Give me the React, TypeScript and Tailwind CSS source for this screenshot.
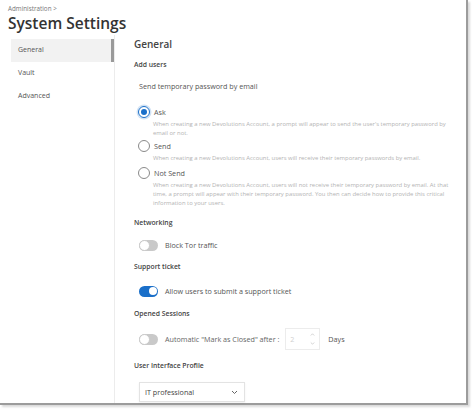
import React from "react";

const font = { fontFamily: '"Open Sans", "Noto Sans", Arial, sans-serif' };

function Radio({ checked }: { checked?: boolean }) {
  return checked ? (
    <span className="flex h-[12px] w-[12px] items-center justify-center rounded-full border-[1.5px] border-[#1a6fc9] shadow-[0_0_0_1.5px_rgba(26,111,201,0.2)]">
      <span className="h-[6px] w-[6px] rounded-full bg-[#1a6fc9]" />
    </span>
  ) : (
    <span className="h-[12px] w-[12px] rounded-full border border-[#8a8a8a]" />
  );
}

function Toggle({ on }: { on?: boolean }) {
  return on ? (
    <span className="flex h-[11px] w-[19px] items-center justify-end rounded-full bg-[#1a6fc9] pr-[1.5px]">
      <span className="h-[8px] w-[8px] rounded-full bg-white" />
    </span>
  ) : (
    <span className="flex h-[11px] w-[19px] items-center rounded-full bg-[#c9c9c9]">
      <span className="h-[11px] w-[11px] rounded-full border border-[#c9c9c9] bg-white" />
    </span>
  );
}

export default function App() {
  return (
    <div className="h-[411px] w-[474px] bg-white" style={font}>
      <div className="flex h-[405px] w-[468px] flex-col border-b-2 border-r-2 border-[#9c9c9c] shadow-[2px_2px_2px_rgba(0,0,0,0.15)]">
        <div className="h-[35px] pl-[8px] pt-[5px]">
          <div className="text-[6.3px] leading-[8px] text-[#777]">Administration &gt;</div>
          <div className="text-[15.5px] font-semibold leading-[20px] text-[#333]">System Settings</div>
        </div>
        <div className="flex flex-1">
          <div className="w-[115px] border-r border-[#ececec] pl-[11px] pt-[4px] text-[7px] text-[#555]">
            <div className="flex h-[23px] items-center border-r-[3px] border-[#9a9a9a] bg-[#f2f2f2] pl-[7px]">General</div>
            <div className="flex h-[23px] items-center pl-[7px]">Vault</div>
            <div className="flex h-[23px] items-center pl-[7px]">Advanced</div>
          </div>
          <div className="flex-1 pl-[19px] text-[#555]">
            <div className="flex h-[18px] items-center text-[10px] font-semibold text-[#444]">General</div>
            <div className="flex h-[24px] items-center text-[6.8px] font-semibold text-[#444]">Add users</div>
            <div className="flex h-[18px] items-center pl-[5px] text-[7.2px]">Send temporary password by email</div>
            <div className="mt-[9px] flex h-[16px] items-center gap-[4px] pl-[4px] text-[7.2px]">
              <Radio checked />
              <span>Ask</span>
            </div>
            <div className="pl-[19px] text-[5.9px] leading-[9px] text-[#b3b3b3]">
              When creating a new Devolutions Account, a prompt will appear to send the user's temporary password by
              <br />
              email or not.
            </div>
            <div className="flex h-[16px] items-center gap-[4px] pl-[4px] text-[7.2px]">
              <Radio />
              <span>Send</span>
            </div>
            <div className="pl-[19px] text-[5.9px] leading-[9px] text-[#b3b3b3]">
              When creating a new Devolutions Account, users will receive their temporary passwords by email.
            </div>
            <div className="mt-[2px] flex h-[16px] items-center gap-[4px] pl-[4px] text-[7.2px]">
              <Radio />
              <span>Not Send</span>
            </div>
            <div className="pl-[19px] text-[5.9px] leading-[9px] text-[#b3b3b3]">
              When creating a new Devolutions Account, users will not receive their temporary password by email. At that
              <br />
              time, a prompt will appear with their temporary password. You then can decide how to provide this critical
              <br />
              information to your users.
            </div>
            <div className="mt-[6px] flex h-[18px] items-center text-[6.8px] font-semibold text-[#444]">Networking</div>
            <div className="mt-[4px] flex h-[18px] items-center gap-[7px] pl-[5px] text-[7.2px]">
              <Toggle />
              <span>Block Tor traffic</span>
            </div>
            <div className="mt-[4px] flex h-[18px] items-center text-[6.8px] font-semibold text-[#444]">Support ticket</div>
            <div className="mt-[6px] flex h-[18px] items-center gap-[7px] pl-[5px] text-[7.2px]">
              <Toggle on />
              <span>Allow users to submit a support ticket</span>
            </div>
            <div className="mt-[5px] flex h-[18px] items-center text-[6.8px] font-semibold text-[#444]">Opened Sessions</div>
            <div className="mt-[5px] flex h-[22px] items-center pl-[5px] text-[7.2px]">
              <Toggle />
              <span className="ml-[7px] text-[#666]">Automatic "Mark as Closed" after :</span>
              <div className="ml-[6px] flex h-[22px] w-[35px] items-center justify-between border border-[#ececec] px-[4px] text-[#d0d0d0]">
                <span>2</span>
                <svg width="5" height="14" viewBox="0 0 5 14" fill="none" stroke="#c8c8c8" strokeWidth="0.8">
                  <path d="M0.8 3.5 L2.5 1.8 L4.2 3.5" />
                  <path d="M0.8 10.5 L2.5 12.2 L4.2 10.5" />
                </svg>
              </div>
              <span className="ml-[8px] text-[#555]">Days</span>
            </div>
            <div className="mt-[7px] flex h-[18px] items-center text-[6.8px] font-semibold text-[#444]">User Interface Profile</div>
            <div className="ml-[5px] mt-[7px] flex h-[20px] w-[106px] items-center justify-between border border-[#e3e3e3] pl-[5px] pr-[6px] text-[7.2px] text-[#444] shadow-[0_1px_2px_rgba(0,0,0,0.06)]">
              <span>IT professional</span>
              <svg width="7" height="5" viewBox="0 0 7 5" fill="none" stroke="#666" strokeWidth="1">
                <path d="M1 1 L3.5 3.5 L6 1" />
              </svg>
            </div>
          </div>
        </div>
      </div>
    </div>
  );
}
